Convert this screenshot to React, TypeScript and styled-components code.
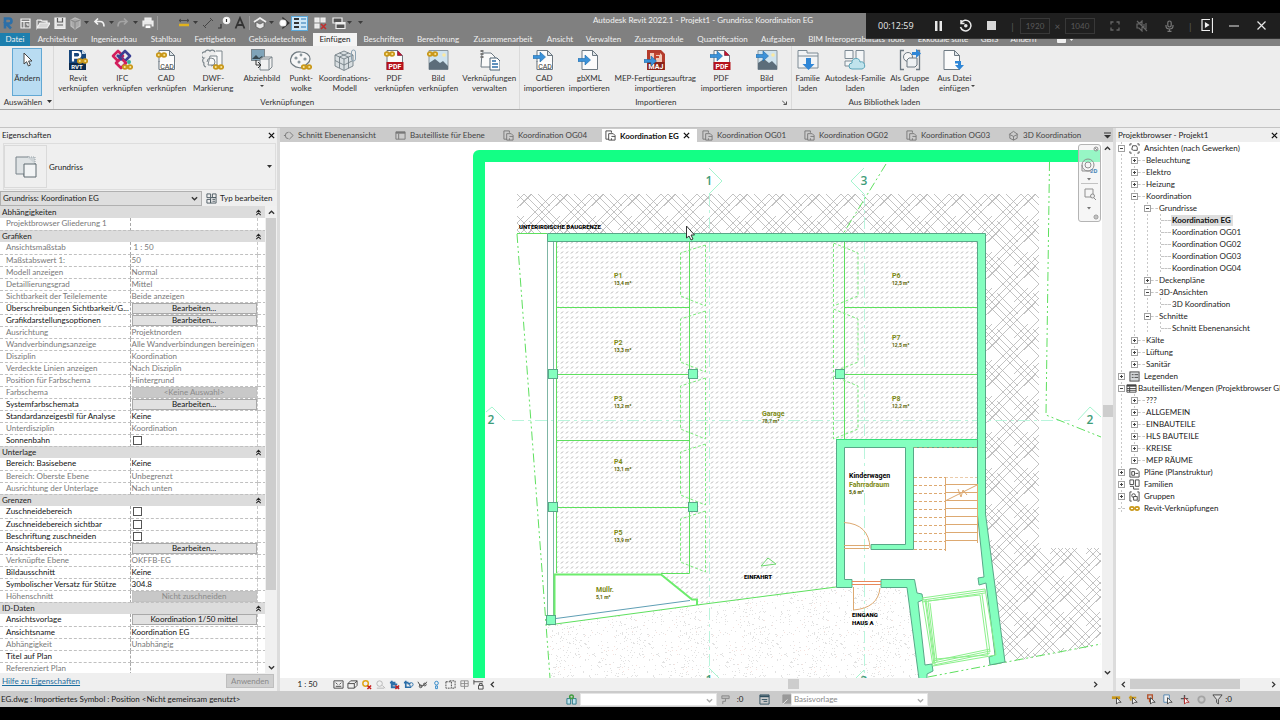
import React from "react";
import styled, { createGlobalStyle, css } from "styled-components";

const GlobalStyle = createGlobalStyle`
  * { box-sizing: border-box; }
  body { margin: 0; background: #000; font-family: Lato, "Open Sans", sans-serif; font-size: 8px; line-height: 12px; color: #222; }
  button, input, select { font: inherit; color: inherit; margin: 0; padding: 0; border: 0; background: none; border-radius: 0; }
  ul { list-style: none; margin: 0; padding: 0; }
  svg { display: block; flex: none; }
`;

const Screen = styled.div`
  display: flex;
  flex-direction: column;
  height: 100vh;
  padding: 13px 0;
  background: #000;
  position: relative;
  overflow: hidden;
  white-space: nowrap;
`;

/* ---------- title bar ---------- */

const TitleBar = styled.header`
  display: flex;
  align-items: center;
  height: 20px;
  background: #808080;
  color: #f2f2f2;
`;
const QuickTools = styled.div`
  display: flex;
  align-items: center;
  height: 17px;
`;
const QuickButton = styled.button<{ $w: number; $on?: boolean }>`
  display: flex;
  align-items: center;
  justify-content: center;
  width: ${(p) => p.$w}px;
  height: 15px;
  ${(p) => p.$on && css`background: #cde6f7; outline: 1px solid #5aa9dc; outline-offset: -1px;`}
`;
const QuickDivider = styled.span<{ $w: number }>`
  width: ${(p) => p.$w}px;
  height: 14px;
  border-left: 1px solid #9c9c9c;
`;
const WindowTitle = styled.h1`
  margin: 0 0 6px 226px;
  font-size: 8px;
  line-height: 12px;
  font-weight: 400;
`;

const RibbonTabs = styled.nav`
  display: flex;
  height: 13px;
  background: #808080;
`;
const RibbonTab = styled.button<{ $w: number; $kind?: "file" | "active" }>`
  flex: none;
  width: ${(p) => p.$w}px;
  height: 13px;
  line-height: 13px;
  color: #f0f0f0;
  text-align: center;
  ${(p) => p.$kind === "file" && css`background: #1d7fae; margin-right: 1px;`}
  ${(p) => p.$kind === "active" && css`background: #f4f4f4; color: #222;`}
`;

/* ---------- recorder overlay ---------- */

const Recorder = styled.div`
  position: absolute;
  top: 13px;
  right: 0;
  width: 414px;
  height: 26px;
  display: flex;
  align-items: center;
  background: #1f1f1f;
  color: #e8e8e8;
  border-bottom: 1px solid #333;
`;
const RecTime = styled.span`
  width: 58px;
  padding-left: 12px;
  font-family: "Open Sans", sans-serif;
  font-size: 9px;
`;
const RecButton = styled.button<{ $w: number }>`
  display: flex;
  align-items: center;
  justify-content: center;
  width: ${(p) => p.$w}px;
  height: 20px;
`;
const RecField = styled.input`
  width: 30px;
  height: 16px;
  border: 1px solid #383838;
  color: #5a5a5a;
  text-align: center;
  font-size: 8px;
`;
const RecText = styled.span<{ $w: number }>`
  width: ${(p) => p.$w}px;
  text-align: center;
  color: #5a5a5a;
  font-size: 10px;
`;

/* ---------- ribbon ---------- */

const Ribbon = styled.section`
  display: flex;
  height: 64px;
  background: #ededed;
  border-bottom: 1px solid #a6a6a6;
  flex: none;
`;
const RibbonGroup = styled.div<{ $pad?: string }>`
  display: flex;
  flex-direction: column;
  padding: ${(p) => p.$pad ?? "0"};
  border-right: 1px solid #dadada;
  &:last-child { border-right: 0; }
`;
const RibbonRow = styled.div`
  display: flex;
  justify-content: center;
  padding-top: 2px;
  height: 50px;
`;
const BigButton = styled.button<{ $w: number; $on?: boolean }>`
  display: flex;
  flex-direction: column;
  align-items: center;
  width: ${(p) => p.$w}px;
  height: 48px;
  padding-top: 1px;
  line-height: 10px;
  color: #333;
  ${(p) => p.$on && css`background: #b9dcf2; outline: 1px solid #62a8d4; outline-offset: -1px;`}
`;
const BigLabel = styled.span`
  margin-top: 2px;
  text-align: center;
  white-space: pre;
  position: relative;
`;
const DropMark = styled.i<{ $right?: boolean }>`
  display: block;
  width: 0;
  height: 0;
  margin: 2px auto 0;
  border: 2px solid transparent;
  border-top-color: #444;
  border-bottom: 0;
  ${(p) => p.$right && css`position: absolute; right: -4px; top: 10px;`}
`;
const GroupLabel = styled.div`
  position: relative;
  display: flex;
  align-items: center;
  justify-content: center;
  gap: 5px;
  line-height: 12px;
  color: #333;
`;
const Launcher = styled.button`
  position: absolute;
  right: 2px;
  top: 4px;
`;
const OptionsBar = styled.div`
  height: 18px;
  flex: none;
  background: #eee;
  border-bottom: 1px solid #c4c4c4;
`;

/* ---------- properties palette ---------- */

const Main = styled.main`
  display: flex;
  flex: 1;
  min-height: 0;
  background: #eee;
`;
const Palette = styled.aside`
  display: flex;
  flex-direction: column;
  width: 280px;
  flex: none;
  background: #efefef;
  border-right: 3px solid #dcdcdc;
`;
const PaletteTitle = styled.div`
  display: flex;
  justify-content: space-between;
  align-items: center;
  height: 14px;
  padding: 0 2px;
  flex: none;
`;
const CloseButton = styled.button`
  width: 8px;
  height: 10px;
  display: flex;
  align-items: center;
  justify-content: center;
`;
const TypeBox = styled.div`
  display: flex;
  align-items: center;
  height: 47px;
  margin: 1px 1px 0 3px;
  border: 1px solid #ddd;
  flex: none;
`;
const TypeThumb = styled.div`
  display: flex;
  align-items: center;
  justify-content: center;
  width: 43px;
  height: 43px;
  margin-right: 2px;
  border: 1px solid #dadada;
`;
const TypeDrop = styled.button`
  margin-left: auto;
  width: 8px;
`;
const InstanceRow = styled.div`
  display: flex;
  align-items: center;
  height: 16px;
  flex: none;
`;
const Combo = styled.label<{ $w: number; $white?: boolean }>`
  position: relative;
  display: flex;
  align-items: center;
  width: ${(p) => p.$w}px;
  height: ${(p) => (p.$white ? 13 : 15)}px;
  background: ${(p) => (p.$white ? "#fff" : "#dedede")};
  border: 1px solid ${(p) => (p.$white ? "#e4e4e4" : "#b0b0b0")};
  select {
    appearance: none;
    width: 100%;
    padding-left: 2px;
    color: ${(p) => (p.$white ? "#888" : "#222")};
    outline: 0;
  }
  svg { position: absolute; right: 3px; top: 3px; pointer-events: none; }
`;
const TypeEdit = styled.button`
  display: flex;
  align-items: center;
  gap: 3px;
  margin-left: 4px;
`;
const GridArea = styled.div`
  display: flex;
  flex: 1;
  min-height: 0;
`;
const GridClip = styled.div`
  width: 265px;
  overflow: hidden;
  background: #fff;
`;
const Grid = styled.table`
  width: 265px;
  table-layout: fixed;
  border-collapse: collapse;
`;
const HeadCell = styled.th`
  height: 12px;
  padding: 0 2px;
  line-height: 11px;
  background: #dcdcdc;
  text-align: left;
  font-weight: 400;
  button { float: right; width: 8px; height: 11px; display: flex; align-items: center; }
`;
const NameCell = styled.th<{ $dim: boolean }>`
  height: 12px;
  padding: 0 0 0 6px;
  line-height: 11px;
  text-align: left;
  font-weight: 400;
  color: ${(p) => (p.$dim ? "#787878" : "#111")};
  border-bottom: 1px dashed #c0c0c0;
  border-right: 1px dashed #a8a8a8;
  overflow: hidden;
`;
const ValueCell = styled.td<{ $dim?: boolean }>`
  height: 12px;
  padding: 0 0 0 1px;
  line-height: 11px;
  color: ${(p) => (p.$dim ? "#787878" : "#111")};
  border-bottom: 1px dashed #c0c0c0;
  border-right: 1px dashed #c8c8c8;
  overflow: hidden;
`;
const CellButton = styled.button<{ $dim: boolean }>`
  display: block;
  width: 125px;
  height: 11px;
  line-height: 9px;
  border: 1px solid ${(p) => (p.$dim ? "#c2c2c2" : "#a9a9a9")};
  background: ${(p) => (p.$dim ? "#c8c8c8" : "#e1e1e1")};
  color: ${(p) => (p.$dim ? "#8a8a8a" : "#111")};
`;
const Check = styled.input`
  appearance: none;
  display: block;
  width: 9px;
  height: 9px;
  margin: 1px;
  border: 1px solid #555;
  background: #fff;
`;
const VScroll = styled.div<{ $from: number; $size: number; $w: number }>`
  display: flex;
  flex-direction: column;
  justify-content: space-between;
  align-items: center;
  width: ${(p) => p.$w}px;
  flex: none;
  background: linear-gradient(#cdcdcd, #cdcdcd) center ${(p) => p.$from}px / 10px ${(p) => p.$size}px no-repeat #f0f0f0;
  button { height: 12px; width: 100%; display: flex; align-items: center; justify-content: center; }
`;
const PaletteFoot = styled.div`
  display: flex;
  justify-content: space-between;
  align-items: center;
  height: 18px;
  padding: 0 3px 2px 2px;
  flex: none;
  a { color: #1a6d9e; }
`;
const Apply = styled.button`
  width: 48px;
  height: 14px;
  line-height: 12px;
  border: 1px solid #bfbfbf;
  background: #cfcfcf;
  color: #8a8a8a;
`;

/* ---------- drawing area ---------- */

const Center = styled.section`
  display: flex;
  flex-direction: column;
  flex: 1;
  min-width: 0;
  background: #fff;
`;
const ViewTabs = styled.div`
  display: flex;
  height: 14px;
  flex: none;
  background: #cbcbcb;
`;
const ViewTab = styled.button<{ $w: number; $on?: boolean }>`
  display: flex;
  align-items: center;
  gap: 4px;
  width: ${(p) => p.$w}px;
  padding-left: 3px;
  color: #444;
  flex: none;
  ${(p) => p.$on && css`background: #fff; color: #111; font-weight: 700; margin: 1px 2px 0 0;`}
`;
const TabMenu = styled.button`
  margin-left: auto;
  width: 12px;
  display: flex;
  align-items: center;
  justify-content: center;
`;
const CanvasRow = styled.div`
  display: flex;
  flex: 1;
  min-height: 0;
`;
const Canvas = styled.div`
  position: relative;
  flex: 1;
  min-width: 0;
  overflow: hidden;
`;
const Plan = styled.svg`
  width: 100%;
  height: 100%;
`;
const NavBar = styled.div`
  position: absolute;
  top: 2px;
  right: 1px;
  width: 23px;
  height: 78px;
  border: 1px solid #b4b4b4;
  border-radius: 3px;
  background: rgba(240, 240, 240, 0.6);
`;
const ViewBar = styled.div`
  display: flex;
  align-items: center;
  height: 13px;
  padding-bottom: 1px;
  flex: none;
  background: #f0f0f0;
`;
const ViewScale = styled.button`
  width: 51px;
  padding-left: 4px;
  text-align: center;
`;
const ViewButton = styled.button`
  width: 14px;
  height: 12px;
  display: flex;
  align-items: center;
  justify-content: center;
`;
const HTrack = styled.div<{ $from: number; $size: number }>`
  flex: 1;
  align-self: stretch;
  background: linear-gradient(#cdcdcd, #cdcdcd) ${(p) => p.$from}px center / ${(p) => p.$size}px 10px no-repeat;
`;

/* ---------- project browser ---------- */

const Browser = styled.aside`
  display: flex;
  flex-direction: column;
  width: 167px;
  flex: none;
  background: #fff;
  border-left: 3px solid #dcdcdc;
`;
const BrowserTitle = styled(PaletteTitle)`
  background: #efefef;
`;
const Tree = styled.ul`
  flex: 1;
  min-height: 0;
  overflow: hidden;
`;
const guide = (x: number) => `linear-gradient(#c8c8c8 60%, transparent 60%) ${x}px 0 / 1px 4px repeat-y`;
const TreeRow = styled.li<{ $level: number }>`
  display: flex;
  align-items: center;
  height: 12px;
  padding-left: ${(p) => p.$level * 13 + 2}px;
  background: ${(p) => Array.from({ length: p.$level + 1 }, (_, i) => guide(i * 13 + 5)).join(", ")};
`;
const TreeToggle = styled.button`
  width: 7px;
  height: 7px;
  border: 1px solid #a2a2a2;
  background: #fff;
  display: flex;
  align-items: center;
  justify-content: center;
  flex: none;
`;
const TreeLine = styled.span<{ $leaf?: boolean }>`
  flex: none;
  width: ${(p) => (p.$leaf ? 10 : 7)}px;
  margin-left: ${(p) => (p.$leaf ? 4 : 0)}px;
  border-top: 1px dashed #c4c4c4;
`;
const TreeIcon = styled.span`
  display: flex;
  width: 18px;
  padding-left: 1px;
  justify-content: center;
`;
const TreeText = styled.span<{ $on?: boolean }>`
  padding: 0 2px 0 1px;
  line-height: 11px;
  ${(p) => p.$on && css`background: #dedede; font-weight: 700; color: #111;`}
`;

/* ---------- status bar ---------- */

const StatusBar = styled.footer`
  display: flex;
  align-items: center;
  height: 16px;
  flex: none;
  background: #cbcbcb;
  color: #222;
`;
const StatusMessage = styled.span`
  width: 562px;
  padding-left: 1px;
`;
const StatusItem = styled.span<{ $w: number }>`
  width: ${(p) => p.$w}px;
  display: flex;
  align-items: center;
  justify-content: center;
  flex: none;
`;
const StatusEnd = styled.div`
  display: flex;
  align-items: center;
  margin-left: auto;
  padding-right: 48px;
`;

/* ---------- small glyphs ---------- */

const Chevron = ({ dir = "down", c = "#333" }: { dir?: "up" | "down" | "left" | "right"; c?: string }) => {
  const d = { down: "M1 2.5l3 3 3-3", up: "M1 5.5l3-3 3 3", left: "M5.5 1l-3 3 3 3", right: "M2.5 1l3 3-3 3" }[dir];
  return <svg width="7" height="7" viewBox="0 0 8 8"><path d={d} fill="none" stroke={c} strokeWidth="1.5" /></svg>;
};
const Cross = ({ s = 7 }: { s?: number }) => (
  <svg width={s} height={s} viewBox="0 0 8 8"><path d="M1 1l6 6M7 1L1 7" stroke="#111" strokeWidth="1.5" /></svg>
);
const Down = ({ c = "#333" }: { c?: string }) => <svg width="5" height="4" viewBox="0 0 5 4"><path d="M0 0h5L2.500 3z" fill={c} /></svg>;
const Collapse = () => (
  <svg width="7" height="7" viewBox="0 0 8 8"><path d="M1.500 4L4 1.500 6.500 4M1.500 7L4 4.500 6.500 7" fill="none" stroke="#222" strokeWidth="1.200" /></svg>
);

/* ---------- ribbon icons ---------- */

const Chain = ({ x, y }: { x: number; y: number }) => (
  <g transform={`translate(${x} ${y})`} fill="#fbe9a0" stroke="#c9981a" strokeWidth="1.700">
    <ellipse cx="3" cy="3" rx="2.200" ry="1.900" />
    <ellipse cx="8" cy="3" rx="2.200" ry="1.900" />
    <path d="M3.500 3h4" />
  </g>
);
const Sheet = ({ x = 3 }: { x?: number }) => (
  <g transform={`translate(${x} 0)`}>
    <path d="M1 1.500h10.500l5 5v14H1z" fill="#fbfbfb" stroke="#6d7982" />
    <path d="M11.500 1.500v5h5z" fill="#dfe5e9" stroke="#6d7982" />
  </g>
);
const BlueArrow = ({ y = 4 }: { y?: number }) => (
  <path d={`M0 ${y + 3.5}h7v-3.500l5.500 5-5.500 5v-3.500H0z`} fill="#3b92d9" stroke="#1d6aa8" strokeWidth=".6" />
);
const Photo = () => (
  <g>
    <path d="M2 1.500h19v19H2z" fill="#cfe3ee" stroke="#8b979e" />
    <circle cx="17" cy="6" r="1.800" fill="#fbe9a0" />
    <path d="M2 14l6-4 5 4 3-2 5 5v3.500H2z" fill="#5c6d7a" />
  </g>
);
const Svg22 = ({ children }: { children: React.ReactNode }) => (
  <svg width="22" height="22" viewBox="0 0 22 22">{children}</svg>
);
const tag = (t: string, fill: string, color: string, weight = 700) => (
  <g>
    <rect x="3.500" y="13" width="17" height="8" fill={fill} />
    <text x="12" y="19.500" fontSize="7" fontFamily="Roboto" fontWeight={weight} textAnchor="middle" fill={color}>{t}</text>
  </g>
);
const cadTag = (
  <g>{tag("CAD", "#fff", "#333", 400)}<path d="M4 12v8.500h15.500V12" fill="none" stroke="#6d7982" /></g>
);

const icons: Record<string, React.ReactNode> = {
  modify: <Svg22><path d="M8 4v11l2.600-2.300 1.800 4.300 2-.9-1.800-4.100H16z" fill="#fff" stroke="#444" /></Svg22>,
  revit: <Svg22><path d="M2 1h13l4 4v16H2z" fill="#16467c" /><path d="M15 1v4h4z" fill="#c5d6e6" /><path d="M6 12.500V3h4.500a2.800 2.800 0 0 1 0 5.600H6.500" fill="none" stroke="#fff" strokeWidth="2.200" /><rect x="2" y="14" width="17" height="7" fill="#0c2b4e" /><text x="10" y="20" fontSize="6" fontFamily="Roboto" fontWeight="700" textAnchor="middle" fill="#fff">RVT</text><Chain x={10} y={9} /></Svg22>,
  ifc: <Svg22><g fill="none" strokeWidth="2.600" strokeLinejoin="round"><path d="M7 2l5 5-5 5-5-5z" stroke="#d21f5e" /><path d="M14 2l5 5-5 5-5-5z" stroke="#3a3f94" /><path d="M10 9l5 5-5 5-5-5z" stroke="#d21f5e" /><path d="M6 6l5 5" stroke="#3a3f94" /></g><circle cx="18" cy="13" r="2" fill="#35b09b" /><Chain x={11} y={15} /></Svg22>,
  cadLink: <Svg22><Sheet />{cadTag}<Chain x={1} y={3} /></Svg22>,
  dwf: <Svg22><path d="M4 18a3 3 0 0 1-2-4 3 3 0 0 1 0-5 3 3 0 0 1 1-6 3 3 0 0 1 5-1 3 3 0 0 1 5 1" fill="none" stroke="#7c868c" strokeWidth="1.200" /><path d="M14 2h6v16h-8M8 7h7v9H6z" fill="#f8f8f8" stroke="#7c868c" /><path d="M5 13a4 4 0 1 1 4 4" fill="none" stroke="#7c868c" /><Chain x={11} y={15} /></Svg22>,
  decal: <Svg22><rect x=".500" y=".500" width="13" height="11" fill="#7fa3b8" stroke="#7c868c" /><path d="M1 10l4-4 3 3 3-2 2 3z" fill="#37474f" /><path d="M9 10l3-2h9v10l-3 3H9z" fill="#f2f2f2" stroke="#7c868c" /><path d="M9 10h9v11M18 10l3-2" fill="none" stroke="#7c868c" /><path d="M5 11v5h4M7 13l3 3-3 3" stroke="#333" fill="none" /></Svg22>,
  points: <Svg22><path d="M3 16a6 6 0 0 1-2-7c1-4 5-7 10-6 5 0 9 3 9 7s-3 4-5 7-9 2-12-1z" fill="#f6f6f6" stroke="#6f7a80" strokeWidth="1.200" /><g fill="#8a969c"><circle cx="6" cy="9" r="1.600" /><circle cx="11" cy="6" r="1.400" /><circle cx="15" cy="10" r="1.600" /><circle cx="9" cy="13" r="1.500" /></g><Chain x={11} y={15} /></Svg22>,
  coord: <Svg22><g fill="#d8dee1" stroke="#737f86" strokeWidth=".9"><path d="M1 6l9-4 9 4v11l-9 4.500L1 17z" /><path d="M1 6l9 4 9-4M10 10v11M1 11.500l9 4.500 9-4.500M5.500 4l9 4.200v11M14.500 4L5.500 8v11" fill="none" /></g><rect x="17.500" y="1" width="4" height="11" rx="2" fill="none" stroke="#8da3b3" /></Svg22>,
  pdfLink: <Svg22><Sheet /><path d="M14.500 1.500v5h5z" fill="#c4122f" />{tag("PDF", "#b5121b", "#fff")}<Chain x={1} y={2} /></Svg22>,
  imageLink: <Svg22><Photo /><Chain x={0} y={2} /></Svg22>,
  manage: <Svg22><path d="M4 4h9l4 4v10H3z" fill="#fafafa" stroke="#6d7982" /><path d="M4 1v9" stroke="#777" strokeWidth="3" strokeDasharray="2 1" /><path d="M12 9h7l3 3v9H12z" fill="#fff" stroke="#4c6273" /><path d="M14 12h4M14 15h6M14 18h6" stroke="#2c6ea8" strokeWidth="1.300" /></Svg22>,
  cadImport: <Svg22><Sheet />{cadTag}<BlueArrow y={3} /></Svg22>,
  xml: <Svg22><Sheet /><BlueArrow y={6} /></Svg22>,
  mep: <Svg22><path d="M3 1h14l4 4v16H3z" fill="#b43c2c" /><path d="M6 4h10l2 2v7H6z" fill="#f2c9b8" /><path d="M11 12V5h5M11 8h4" fill="none" stroke="#c2452f" strokeWidth="2" />{tag("MAJ", "#8a2318", "#fff")}<BlueArrow y={7} /></Svg22>,
  pdfImport: <Svg22><Sheet /><path d="M14.500 1.500v5h5z" fill="#c4122f" />{tag("PDF", "#b5121b", "#fff")}<BlueArrow y={2} /></Svg22>,
  imageImport: <Svg22><Photo /><BlueArrow y={2} /></Svg22>,
  family: <Svg22><path d="M1 4V1.500h9V4h11v15H1z" fill="#f1f3f5" stroke="#7c8a94" /><path d="M1 7h20" stroke="#7c8a94" /><path d="M9 9h5v6h3.500l-6 6-6-6H9z" fill="#2f86d6" /></Svg22>,
  cloudFamily: <Svg22><path d="M1 1.500h8v8H1zM12 1.500h8v16h-8zM1 12h8v5H1z" fill="#f4f6f7" stroke="#7c8a94" /><path d="M8 20a3 3 0 0 1 0-6 4 4 0 0 1 8-1 3.500 3.500 0 0 1 2 7z" fill="#bfe3ec" stroke="#58a3b8" /></Svg22>,
  group: <Svg22><path d="M5 1.500H1.500v19H5M17 1.500h3.500v19H17" fill="none" stroke="#6d7982" strokeWidth="1.300" /><circle cx="9" cy="8" r="4.500" fill="#f6f6f6" stroke="#6d7982" /><path d="M8 11l2-2h8v7l-2 2H8z" fill="#eef1f3" stroke="#6d7982" /><path d="M13 3h4V0l5 4.500L17 9V6h-4z" fill="#2f86d6" /></Svg22>,
  file: <Svg22><Sheet x={0} /><path d="M12 12h6v4h3l-4.500 5-4.500-5h3v-1.500h-3z" fill="#2f86d6" /></Svg22>,
};

type RibbonItem = [string, string, number, ("below" | "right")?];
const ribbonGroups: { label: string; pad: string; launcher?: boolean; items: RibbonItem[] }[] = [
  {
    label: "Verknüpfungen", pad: "0 1px 0 2px",
    items: [
      ["revit", "Revit\nverknüpfen", 44], ["ifc", "IFC\nverknüpfen", 44], ["cadLink", "CAD\nverknüpfen", 44],
      ["dwf", "DWF-\nMarkierung", 50], ["decal", "Abziehbild", 47, "below"], ["points", "Punkt-\nwolke", 32],
      ["coord", "Koordinations-\nModell", 55], ["pdfLink", "PDF\nverknüpfen", 44], ["imageLink", "Bild\nverknüpfen", 44],
      ["manage", "Verknüpfungen\nverwalten", 58],
    ],
  },
  {
    label: "Importieren", pad: "0 2px", launcher: true,
    items: [
      ["cadImport", "CAD\nimportieren", 44], ["xml", "gbXML\nimportieren", 46], ["mep", "MEP-Fertigungsauftrag\nimportieren", 86],
      ["pdfImport", "PDF\nimportieren", 46], ["imageImport", "Bild\nimportieren", 45],
    ],
  },
  {
    label: "Aus Bibliothek laden", pad: "0",
    items: [
      ["family", "Familie\nladen", 31], ["cloudFamily", "Autodesk-Familie\nladen", 64], ["group", "Als Gruppe\nladen", 45],
      ["file", "Aus Datei\neinfügen", 44, "right"],
    ],
  },
];

const ribbonTabs: [string, number, ("file" | "active")?][] = [
  ["Datei", 30, "file"], ["Architektur", 53], ["Ingenieurbau", 60], ["Stahlbau", 44], ["Fertigbeton", 54], ["Gebäudetechnik", 71],
  ["Einfügen", 44, "active"], ["Beschriften", 53], ["Berechnung", 56], ["Zusammenarbeit", 74], ["Ansicht", 40], ["Verwalten", 47],
  ["Zusatzmodule", 64], ["Quantification", 63], ["Aufgaben", 48], ["BIM Interoperabilitäts Tools", 109], ["Ekkodale suite", 64],
  ["GBIS", 29], ["Ändern", 39],
];

/* ---------- quick access icons ---------- */

const Q = ({ children }: { children: React.ReactNode }) => (
  <svg width="14" height="14" viewBox="0 0 14 14" fill="none" stroke="#f0f0f0" strokeWidth="1.200">{children}</svg>
);
const dropdown = <Down c="#3c3c3c" />;
const quickItems: { name: string; w: number; icon?: React.ReactNode; divider?: boolean; on?: boolean }[] = [
  { name: "Revit", w: 16, icon: <Q><path d="M4 12.500V2.500h4a2.500 2.500 0 0 1 0 5H5l5 5" stroke="#2c6fa8" strokeWidth="2.600" /></Q> },
  { name: "Start", w: 17, icon: <Q><path d="M3 3h9v9H3zM3 5.500h9M6 5.500V12" /><path d="M8 8h2v2" /></Q> },
  { name: "Öffnen", w: 19, icon: <Q><path d="M1 4h4l1 1h5v2M1 4v8l3-5h10l-3 5H1" fill="#d6d6d6" /></Q> },
  { name: "Speichern", w: 16, icon: <Q><path d="M2 2h10v10.500H2z" fill="#e4e4e4" /><path d="M4.500 2v4h5V2M4 9h6" stroke="#5a5a5a" /></Q> },
  { name: "Synchronisieren", w: 15, icon: <Q><path d="M2 4l4-2 5 2v6l-5 3-4-3z" fill="#a9a9a9" stroke="#bdbdbd" /><path d="M2 4l4 2 5-2M6 6v7" stroke="#8a8a8a" /></Q> },
  { name: "Synchronisieren Optionen", w: 7, icon: dropdown },
  { name: "Rückgängig", w: 18, icon: <Q><path d="M6 2.500L3 5.500l3 3M3 5.500h5q4 0 4 5" strokeWidth="1.700" /></Q> },
  { name: "Rückgängig Liste", w: 6, icon: dropdown },
  { name: "Wiederherstellen", w: 18, icon: <Q><path d="M8 2.500l3 3-3 3M11 5.500H6q-4 0-4 5" stroke="#a4a4a4" strokeWidth="1.700" /></Q> },
  { name: "Wiederherstellen Liste", w: 6, icon: dropdown },
  { name: "Drucken", w: 19, icon: <Q><path d="M4 5V2h6v3M2 5h10v5H2z" fill="#e8e8e8" /><path d="M4 9h6v3.500H4z" fill="#fff" stroke="#888" /></Q> },
  { name: "", w: 18, divider: true },
  { name: "Messen", w: 17, icon: <Q><path d="M2 4.500h10M4 3L2 4.500 4 6M10 3l2 1.500L10 6" stroke="#444" strokeWidth=".9" /><path d="M2 9h10" stroke="#e0b21e" strokeWidth="2.500" /></Q> },
  { name: "Messen Optionen", w: 7, icon: dropdown },
  { name: "Bemaßung", w: 18, icon: <Q><path d="M3 11l8-8M2 9l3 3M9 2l3 3" stroke="#444" strokeWidth="1" /></Q> },
  { name: "Beschriften", w: 14, icon: <Q><circle cx="9.500" cy="4.500" r="3.200" fill="#fff" /><path d="M9.500 3v3" stroke="#333" /><path d="M1 12h3V8" stroke="#333" /></Q> },
  { name: "Text", w: 18, icon: <Q><path d="M2.500 12.500L7 2l4.500 10.500M4 9h6" stroke="#333" strokeWidth="1.800" /></Q> },
  { name: "", w: 3, divider: true },
  { name: "3D-Ansicht", w: 15, icon: <Q><path d="M1 6l6-4 6 4" strokeWidth="1.800" /><path d="M3 6v5l4 2 4-2V6L7 8z" fill="#e8e8e8" stroke="#555" strokeWidth=".7" /></Q> },
  { name: "3D-Ansicht Optionen", w: 8, icon: dropdown },
  { name: "Schnitt", w: 16, icon: <Q><path d="M7 2l6 5-6 5z" fill="#333" stroke="#333" /><circle cx="7" cy="7" r="3" fill="#fff" /></Q> },
  { name: "Feine Linien", w: 17, on: true, icon: <Q><path d="M1 3h5M1 7h5M1 11h5" stroke="#333" strokeWidth="1.800" /><path d="M8 3h5M8 7h5M8 11h5" stroke="#2675b3" /></Q> },
  { name: "Inaktive schließen", w: 24, icon: <Q><path d="M2 2h4v4H2zM8 2h4v4H8zM2 8h4v4H2z" fill="#e8e8e8" /><path d="M8 8l5 5M13 8l-5 5" stroke="#c22e2e" strokeWidth="1.600" /></Q> },
  { name: "Fenster wechseln", w: 14, icon: <Q><path d="M1 2h9v5H1zM4 6.500h9v6H4z" fill="#555" /><path d="M4 7.500h9" strokeWidth="2" /></Q> },
  { name: "Fenster Liste", w: 7, icon: dropdown },
  { name: "Anpassen", w: 14, icon: dropdown },
];

/* ---------- property data ---------- */

type Prop = { n: string; v?: string; dim?: boolean; kind?: "head" | "button" | "check" };
const h = (n: string): Prop => ({ n, kind: "head" });
const d = (n: string, v = ""): Prop => ({ n, v, dim: true });
const t = (n: string, v = ""): Prop => ({ n, v });
const b = (n: string, v: string, dim = false): Prop => ({ n, v, dim, kind: "button" });
const c = (n: string): Prop => ({ n, kind: "check" });
const props: Prop[] = [
  h("Abhängigkeiten"), d("Projektbrowser Gliederung 1"),
  h("Grafiken"), d("Ansichtsmaßstab", "\u00a01 : 50"), d("Maßstabswert 1:", "50"), d("Modell anzeigen", "Normal"),
  d("Detaillierungsgrad", "Mittel"), d("Sichtbarkeit der Teilelemente", "Beide anzeigen"),
  b("Überschreibungen Sichtbarkeit/G...", "Bearbeiten..."), b("Grafikdarstellungsoptionen", "Bearbeiten..."),
  d("Ausrichtung", "Projektnorden"), d("Wandverbindungsanzeige", "Alle Wandverbindungen bereinigen"),
  d("Disziplin", "Koordination"), d("Verdeckte Linien anzeigen", "Nach Disziplin"), d("Position für Farbschema", "Hintergrund"),
  b("Farbschema", "<Keine Auswahl>", true), b("Systemfarbschemata", "Bearbeiten..."), t("Standardanzeigestil für Analyse", "Keine"),
  d("Unterdisziplin", "Koordination"), c("Sonnenbahn"),
  h("Unterlage"), t("Bereich: Basisebene", "Keine"), d("Bereich: Oberste Ebene", "Unbegrenzt"), d("Ausrichtung der Unterlage", "Nach unten"),
  h("Grenzen"), c("Zuschneidebereich"), c("Zuschneidebereich sichtbar"), c("Beschriftung zuschneiden"),
  b("Ansichtsbereich", "Bearbeiten..."), d("Verknüpfte Ebene", "OKFFB-EG"), t("Bildausschnitt", "Keine"),
  t("Symbolischer Versatz für Stütze", "304.8"), b("Höhenschnitt", "Nicht zuschneiden", true),
  h("ID-Daten"), b("Ansichtsvorlage", "Koordination 1/50 mittel"), t("Ansichtsname", "Koordination EG"),
  d("Abhängigkeit", "Unabhängig"), t("Titel auf Plan"), d("Referenziert Plan"),
];

/* ---------- tree data ---------- */

type Node = [number, "+" | "-" | "", string, string?];
const tree: Node[] = [
  [0, "-", "Ansichten (nach Gewerken)", "views"], [1, "+", "Beleuchtung"], [1, "+", "Elektro"], [1, "+", "Heizung"], [1, "-", "Koordination"],
  [2, "-", "Grundrisse"], [3, "", "Koordination EG"], [3, "", "Koordination OG01"], [3, "", "Koordination OG02"], [3, "", "Koordination OG03"],
  [3, "", "Koordination OG04"], [2, "+", "Deckenpläne"], [2, "-", "3D-Ansichten"], [3, "", "3D Koordination"], [2, "-", "Schnitte"],
  [3, "", "Schnitt Ebenenansicht"], [1, "+", "Kälte"], [1, "+", "Lüftung"], [1, "+", "Sanitär"], [0, "+", "Legenden", "legend"],
  [0, "-", "Bauteillisten/Mengen (Projektbrowser Gliederung)", "table"], [1, "+", "???"], [1, "+", "ALLGEMEIN"], [1, "+", "EINBAUTEILE"],
  [1, "+", "HLS BAUTEILE"], [1, "+", "KREISE"], [1, "+", "MEP RÄUME"], [0, "+", "Pläne (Planstruktur)", "sheet"],
  [0, "+", "Familien", "family"], [0, "+", "Gruppen", "group"], [0, "", "Revit-Verknüpfungen", "link"],
];
const treeArt: Record<string, React.ReactNode> = {
  views: <path d="M1 3V1h2M9 1h2v2M11 9v2H9M3 11H1V9M4 3h4l1 2v3H5L3 7z" />,
  legend: <g><rect x="1" y="1" width="10" height="10" fill="#d5d8da" /><path d="M3 4h2M6 4h4M3 7h2M6 7h4" /></g>,
  table: <g><path d="M1 2h10v8H1zM1 6h10M1 8h10M4 4v6" /><path d="M1 3h10" strokeWidth="2" /></g>,
  sheet: <path d="M1 2h7l3 3v6H1zM3 5h3v4H3zM7 7h3" />,
  family: <path d="M1 1h4v5H1zM7 1h4v7H7zM1 8h4v3h6" />,
  group: <g><path d="M3 1H1v10h2M9 1h2v10H9" /><circle cx="5" cy="5" r="2" /><path d="M5 6h4v4H5z" fill="#fff" /></g>,
  link: <g stroke="#c9981a" strokeWidth="1.800"><ellipse cx="3.200" cy="6" rx="2.200" ry="1.800" /><ellipse cx="8.800" cy="6" rx="2.200" ry="1.800" /></g>,
};

const viewTabs: [string, string, number, boolean?][] = [
  ["section", "Schnitt Ebenenansicht", 112], ["list", "Bauteilliste für Ebene", 108], ["plan", "Koordination OG04", 102],
  ["plan", "Koordination EG", 95, true], ["plan", "Koordination OG01", 102], ["plan", "Koordination OG02", 102],
  ["plan", "Koordination OG03", 102], ["cube", "3D Koordination", 80],
];
const tabArt: Record<string, React.ReactNode> = {
  section: <path d="M1 6h2M6 2.500a3.500 3.500 0 1 0 0 7M7 2l4 4-4 4" />,
  list: <g><path d="M1 2h10v8H1zM4 4v6" /><path d="M1 3h10" strokeWidth="2" /></g>,
  plan: <path d="M1 1h6v2M1 1v9h3M4 4h5l2 2v5H4zM7 7h4M7 9v2" />,
  cube: <path d="M1 5l5-3.500L11 5M2 5v4l4 2 4-2V5M2 5l4 2 4-2M6 7v4" />,
};

/* ---------- floor plan ---------- */

const stipple = (() => {
  const dots: [number, number][] = [];
  let s = 7;
  const next = () => (s = (s * 16807) % 2147483647) / 2147483647;
  for (let i = 0; i < 260; i++) dots.push([Math.floor(next() * 64), Math.floor(next() * 64)]);
  return dots;
})();

const GREEN = "#5ee05e";
const WALL = { fill: "#84ffbf", stroke: "#58a888", strokeWidth: 1 };
const leftBays = [241, 307, 374, 440, 507];
const rightBays = [241, 307, 374];
const rooms: [number, number, string, string][] = [
  [614, 278, "P1", "13,4 m²"], [614, 345, "P2", "13,3 m²"], [614, 401, "P3", "13,2 m²"], [614, 464, "P4", "13,1 m²"], [614, 535, "P5", "13,9 m²"],
  [892, 278, "P6", "12,5 m²"], [892, 340, "P7", "12,5 m²"], [892, 401, "P8", "12,2 m²"],
  [762, 416, "Garage", "78,7 m²"], [596, 592, "Müllr.", "5,1 m²"],
];
const columns: [number, number][] = [[553, 374], [693, 374], [840, 374], [553, 507], [693, 507], [551, 620]];

const FloorPlan = () => (
  <Plan viewBox="280 142 822 536" preserveAspectRatio="xMinYMin slice" role="img" aria-label="Grundriss Koordination EG">
    <defs>
      <pattern id="dots" width="5" height="5" patternUnits="userSpaceOnUse">
        <path d="M1 3.500L3 1.500" stroke="#989898" strokeWidth=".8" />
      </pattern>
      <pattern id="cross" width="36" height="36" patternUnits="userSpaceOnUse" patternTransform="translate(517 194)">
        <g stroke="#b4b4b4" strokeWidth=".8">
          {[-36, -29, -22, 0, 7, 14].map((o) => <path key={o} d={`M${o} 0l36 36`} />)}
          {[0, 7, 14, 36, 43, 50].map((o) => <path key={o + "b"} d={`M${o} 0l-36 36`} />)}
          <path d="M21 0l12 12M15 0L3 12M21 36l-9-9M29 36l7-7M0 29l7-7" />
        </g>
      </pattern>
      <pattern id="stipple" width="64" height="64" patternUnits="userSpaceOnUse">
        {stipple.map(([x, y], i) => <rect key={i} x={x} y={y} width="1" height="1" fill={i % 9 ? "#e2e2e2" : "#f6e2de"} />)}
      </pattern>
    </defs>

    <path d="M548 625L697 605 836 587H907L919 678H549z" fill="url(#stipple)" />
    <path d="M517 194H1039V548H1101V645L1005 663 986 515V233H517z" fill="url(#cross)" />
    <path d="M556 241H977V440H836V587L697 604 661 573H556z" fill="url(#dots)" />
    <path d="M479 678V156H1101" fill="none" stroke="#13ff85" strokeWidth="12" strokeLinejoin="round" />

    <g fill="none" stroke="#b9f5dc" strokeDasharray="12 4 3 4">
      <path d="M709.500 194V678M864.500 194V678M512 420.500H1070" />
    </g>
    <g fill="none" stroke="#a5f5cf">
      <path d="M709 168l13 13-13 13M864 168l-13 13 13 13M486 412l6-5 13 13M1078 420l12-13 11 10M709 668l10 10M864 670l-8 8" />
    </g>
    <g fontFamily="Open Sans" fontSize="12" fontWeight="600" fill="#3f9d78" textAnchor="middle">
      <text x="709" y="185">1</text><text x="864" y="185">3</text><text x="491" y="424">2</text><text x="1090" y="424">2</text>
      <text x="709" y="684">1</text><text x="864" y="685">3</text>
    </g>
    <g fill="none" stroke={GREEN} strokeDasharray="9 3 2 3 2 3">
      <path d="M517 234L550 678M886 164L843 234M1049.500 162L1046 415 1101 437M928 677L1101 644" />
    </g>
    <path d="M517 233.500H547" stroke={GREEN} />

    <path d="M554 575H661L693 601 554 619z" fill="#fff" />
    <path d="M547.500 241V622M553.500 241V615" stroke="#7fb5a5" />
    <path d="M556.500 241V573M689.500 241V573.500H661M844.500 241V440" fill="none" stroke={GREEN} />
    {leftBays.slice(1).map((y) => <path key={y} d={`M556 ${y}.5H690`} stroke={GREEN} />)}
    {rightBays.slice(1).map((y) => <path key={y} d={`M844 ${y}.5H978`} stroke={GREEN} />)}
    <g fill="none" stroke="#7bea7b" strokeDasharray="3 2">
      {leftBays.map((y) => <path key={y} d={`M705.500 ${y + 4}L680.500 ${y + 12}V${y + 55}L705.500 ${y + 65}z`} />)}
      {rightBays.map((y) => <path key={y} d={`M833.500 ${y + 2}L858 ${y + 12}V${y + 55}L833.500 ${y + 65}z`} />)}
    </g>

    <path d="M554.500 620V574.500H661L692 599.500H697V605" fill="none" stroke="#6cec6c" strokeWidth="2" />
    <path d="M556 618.500L690 600.500" stroke="#5f9fb5" />
    <path d="M548 625L697 605 836 587" fill="none" stroke={GREEN} />

    <path {...WALL} d="M547.500 233.500H985.500V514L1005 662 990 665 989 657 995 655 986 583 979 585 978 578 984 577 977.500 515V241.500H547.500z" />
    <path {...WALL} d="M836.500 439.500H977.500V447.500H913.500V549.500H871V544.500H905.500V447.500H844.500V579.500H852V587.500H836.500z" />
    <path {...WALL} d="M881 579.500H914.500L917 593 922 594 923 600 918 602 925 665 932 664 933 671 927 674V679H919L907 587.500H881z" />
    <path d="M836 439.500H978" stroke="#35e07a" />
    {columns.map(([x, y]) => <rect key={`${x}-${y}`} {...WALL} x={x - 4.5} y={y - 4.5} width="9" height="9" />)}

    <g fill="none" stroke="#8cf08c">
      <path d="M922 598L985 589 996 655 933 666zM922 602L985 593M923 600L985 591M928 601L980 595 988 655 935 659zM930 603L937 662M933 663L990 651M933 661L990 649M934 665L990 653M982 594L990 652M925 600L934 664M926 600L935 664" />
    </g>

    <g fill="none" stroke="#dda971">
      {Array.from({ length: 10 }, (_, i) => <path key={i} d={`M914 ${477 + i * 8}.500H945`} strokeDasharray="3 2" />)}
      {Array.from({ length: 8 }, (_, i) => <path key={i} d={`M945 ${484 + i * 8}.500H977`} />)}
      <path d="M945.500 477V551M977.500 484V543M945 501L977 485M958 489l3 8 2-7 4 5" />
      <path d="M914 447.500H977M945 477.500H977" strokeDasharray="3 2" opacity=".6" />
      <path d="M844 522.500Q869 524 870 548M844 545.500H869M844 548.500H869" />
      <path d="M852 581.500H881M852 584.500H881" stroke="#e8895a" />
      <path d="M853.500 587V610Q878 608 880 588" />
    </g>

    {rooms.map(([x, y, name, area]) => (
      <g key={name} fontFamily="Roboto" fontWeight="700" fill="#5d6608">
        <text x={x} y={y} fontSize="7" fill="#7d8a14">{name}</text>
        <text x={x} y={y + 7} fontSize="5">{area}</text>
      </g>
    ))}
    <g fontFamily="Roboto" fontWeight="900" fill="#000" fontSize="6">
      <text x="519" y="229">UNTERIRDISCHE BAUGRENZE</text>
      <text x="744" y="579">EINFAHRT</text>
      <text x="849" y="478" fontSize="7" fontWeight="700">Kinderwagen</text>
      <text x="849" y="487" fontSize="7" fontWeight="700" fill="#7d8a14">Fahrradraum</text>
      <text x="849" y="494" fontSize="5" fill="#5d6608">5,6 m²</text>
      <text x="852" y="617">EINGANG</text>
      <text x="852" y="625">HAUS A</text>
    </g>
    <path d="M761 566L768 558 776 564z" fill="none" stroke="#6cd66c" />
    <path d="M686.500 226V238L689 236 691 240 693 239 691 235H694.500z" fill="#fff" stroke="#333" />
  </Plan>
);

/* ---------- view control / status icons ---------- */

const S = ({ children, c = "#444" }: { children: React.ReactNode; c?: string }) => (
  <svg width="11" height="11" viewBox="0 0 12 12" fill="none" stroke={c} strokeWidth="1">{children}</svg>
);
const viewIcons: [string, React.ReactNode][] = [
  ["Detaillierungsgrad", <S><path d="M1 2h10v8H1zM3 4l2 2M9 4L7 6M3 8h6" /></S>],
  ["Bildstil", <S><path d="M1 5l3-3h7v5l-3 3H1zM1 5h7v5M8 5l3-3" /></S>],
  ["Sonnenbahn", <S><circle cx="5" cy="5" r="3" stroke="#e0a516" strokeWidth="1.600" /><path d="M7 7l4 4M11 7l-4 4" stroke="#c81e1e" strokeWidth="1.600" /></S>],
  ["Schatten", <S c="#b5b5b5"><circle cx="5" cy="5" r="3" /><path d="M2 10h8M8 7l3 3" /></S>],
  ["Zuschneiden", <S c="#2c6ea8"><path d="M1 4h6M3 2v7h8M4 6h5" strokeWidth="2" /><path d="M7 7l4 4M11 7l-4 4" stroke="#c81e1e" strokeWidth="1.600" /></S>],
  ["Zuschneidebereich", <S c="#2c6ea8"><path d="M1 4h5M3 2v7h6M5 5h3" strokeWidth="1.800" /><circle cx="9" cy="6" r="2" /></S>],
  ["Ausblenden", <S><path d="M1 3l3 5 3-1 4-4" /><circle cx="4" cy="8" r="1.500" /><circle cx="8.500" cy="6" r="1.500" /></S>],
  ["Anzeigen", <S c="#2c86c8"><circle cx="6" cy="4.500" r="2" /><path d="M5 7.500h2v3H5z" /></S>],
  ["Ansichtseigenschaften", <S><path d="M1 3h6v7H1zM5 2h6v8H7" strokeDasharray="2 1" /></S>],
  ["Analysemodell", <S c="#8a8a8a"><path d="M2 2h8v6H2zM2 5h8M6 2v9" /></S>],
  ["Abhängigkeiten", <S><path d="M1 1v5M1 3h10M6 7h5v4H6zM7 7V5h3v2" /></S>],
];
const selectIcons: [string, React.ReactNode][] = [
  ["Verknüpfungen", <S c="#c9981a"><path d="M1 4h9" strokeWidth="3" /><path d="M6 4v7l2-2h3z" fill="#fff" stroke="#444" /></S>],
  ["Unterlage", <S><path d="M1 4h8M3 2v5" stroke="#c9981a" strokeWidth="2" /><path d="M5 4v7l2-2h3z" fill="#fff" /></S>],
  ["Fixiert", <S><path d="M3 1h5v4H3zM5 5v4" stroke="#b3502a" strokeWidth="1.500" /><path d="M6 4v7l2-2h3z" fill="#fff" /></S>],
  ["Fläche", <S><path d="M2 1h6v8H2z" fill="#f3f3f3" stroke="#4f83b0" /><path d="M6 4v7l2-2h3z" fill="#fff" /></S>],
  ["Ziehen", <S><path d="M2 5h8M6 1v8" stroke="#555" strokeWidth="1.500" /><path d="M6 4v7l2-2h3z" fill="#fff" stroke="#b32a2a" /></S>],
  ["Prozesse", <S c="#a4a4a4"><circle cx="6" cy="6" r="3.500" strokeWidth="2" /></S>],
];

export default function App() {
  return (
    <>
      <GlobalStyle />
      <Screen>
        <TitleBar>
          <QuickTools>
            {quickItems.map((q, i) =>
              q.divider ? <QuickDivider key={i} $w={q.w} /> : (
                <QuickButton key={i} $w={q.w} $on={q.on} aria-label={q.name}>{q.icon}</QuickButton>
              ),
            )}
          </QuickTools>
          <WindowTitle>Autodesk Revit 2022.1 - Projekt1 - Grundriss: Koordination EG</WindowTitle>
        </TitleBar>
        <RibbonTabs>
          {ribbonTabs.map(([name, w, kind]) => <RibbonTab key={name} $w={w} $kind={kind}>{name}</RibbonTab>)}
          <RibbonTab $w={44} aria-label="Ribbon minimieren">
            <svg width="32" height="8" viewBox="0 0 32 8"><rect x="14" y="0" width="9" height="7" rx="1" fill="#f0f0f0" /><path d="M26 2h5l-2.500 3z" fill="#f0f0f0" /></svg>
          </RibbonTab>
        </RibbonTabs>

        <Ribbon>
          <RibbonGroup $pad="0 1px 0 2px">
            <RibbonRow>
              <BigButton $w={30} $on>{icons.modify}<BigLabel>Ändern</BigLabel></BigButton>
            </RibbonRow>
            <GroupLabel>&nbsp;Auswählen<Down /></GroupLabel>
          </RibbonGroup>
          {ribbonGroups.map((g) => (
            <RibbonGroup key={g.label} $pad={g.pad}>
              <RibbonRow>
                {g.items.map(([icon, label, w, drop]) => (
                  <BigButton key={icon} $w={w}>
                    {icons[icon]}
                    <BigLabel>{label}{drop && <DropMark $right={drop === "right"} />}</BigLabel>
                  </BigButton>
                ))}
              </RibbonRow>
              <GroupLabel>
                {g.label}
                {g.launcher && (
                  <Launcher aria-label="Importoptionen"><svg width="5" height="5" viewBox="0 0 5 5"><path d="M0 .5l4 4M4.500 1.500v3h-3" fill="none" stroke="#555" /></svg></Launcher>
                )}
              </GroupLabel>
            </RibbonGroup>
          ))}
        </Ribbon>
        <OptionsBar />

        <Main>
          <Palette>
            <PaletteTitle>Eigenschaften<CloseButton aria-label="Schließen"><Cross /></CloseButton></PaletteTitle>
            <TypeBox>
              <TypeThumb>
                <svg width="22" height="22" viewBox="0 0 22 22"><path d="M1 1h13l6 6v13H9v-2H1z" fill="#dfe3e5" stroke="#78838a" /><path d="M12 1h8v7" fill="#cdd3d6" stroke="#9aa4aa" strokeDasharray="1 1" /><path d="M9 8h12v13H9z" fill="#f2f4f5" stroke="#5f6a70" /></svg>
              </TypeThumb>
              Grundriss
              <TypeDrop aria-label="Typ wählen"><Down /></TypeDrop>
            </TypeBox>
            <InstanceRow>
              <Combo $w={202}>
                <select aria-label="Ansicht"><option>Grundriss: Koordination EG</option></select>
                <Chevron />
              </Combo>
              <TypeEdit>
                <svg width="11" height="11" viewBox="0 0 12 12" fill="none" stroke="#4c5a63"><path d="M1 1h4v4H1zM7 1h4v4H7zM1 7h4v4H1zM5 5h6v6H5zM7 7h3M7 9h3" /></svg>
                Typ bearbeiten
              </TypeEdit>
            </InstanceRow>
            <GridArea>
              <GridClip>
                <Grid>
                  <colgroup><col width="130" /><col width="127" /><col width="8" /></colgroup>
                  <tbody>
                    {props.map((p) => p.kind === "head" ? (
                      <tr key={p.n}><HeadCell colSpan={3}><button aria-label={`${p.n} einklappen`}><Collapse /></button>{p.n}</HeadCell></tr>
                    ) : (
                      <tr key={p.n}>
                        <NameCell scope="row" $dim={!!p.dim}>{p.n}</NameCell>
                        <ValueCell $dim={p.dim}>
                          {p.kind === "button" ? <CellButton $dim={!!p.dim}>{p.v}</CellButton>
                            : p.kind === "check" ? <Check type="checkbox" aria-label={p.n} />
                            : <span>{p.v}</span>}
                        </ValueCell>
                        <ValueCell />
                      </tr>
                    ))}
                  </tbody>
                </Grid>
              </GridClip>
              <VScroll $from={12} $size={372} $w={12}>
                <button aria-label="Nach oben"><Chevron dir="up" /></button>
                <button aria-label="Nach unten"><Chevron /></button>
              </VScroll>
            </GridArea>
            <PaletteFoot><a href="#hilfe">Hilfe zu Eigenschaften</a><Apply>Anwenden</Apply></PaletteFoot>
          </Palette>

          <Center>
            <ViewTabs>
              {viewTabs.map(([icon, name, w, on]) => (
                <ViewTab key={name} $w={w} $on={on}>
                  <S c={on ? "#444" : "#777"}>{tabArt[icon]}</S>{name}{on && <Cross />}
                </ViewTab>
              ))}
              <TabMenu aria-label="Alle Ansichten"><svg width="7" height="7" viewBox="0 0 7 7"><path d="M0 1h7" stroke="#333" /><path d="M0 3h7L3.500 6.500z" fill="#333" /></svg></TabMenu>
            </ViewTabs>
            <CanvasRow>
              <Canvas>
                <FloorPlan />
                <NavBar>
                  <svg width="21" height="76" viewBox="0 0 21 76" fill="none" stroke="#8f8f8f">
                    <circle cx="17" cy="4" r="2" /><circle cx="17" cy="72" r="2" /><path d="M16 72h2M16 3l2 2" />
                    <circle cx="9" cy="20" r="6" /><circle cx="9" cy="20" r="3" /><path d="M3 20v6h9" />
                    <text x="11" y="28" fontSize="6" fontFamily="Roboto" fontWeight="700" fill="#4a86b8" stroke="none">2D</text>
                    <path d="M2 38.500h17" stroke="#c2c2c2" /><path d="M6 44h8v8H6z" /><circle cx="13.500" cy="51" r="2" fill="#eee" /><path d="M15 53l2 2" />
                    <path d="M8 33h4l-2 2.500zM8 62h4l-2 2.500z" fill="#777" stroke="none" />
                  </svg>
                </NavBar>
              </Canvas>
              <VScroll $from={263} $size={12} $w={11}>
                <button aria-label="Nach oben"><Chevron dir="up" /></button>
                <button aria-label="Nach unten"><Chevron /></button>
              </VScroll>
            </CanvasRow>
            <ViewBar>
              <ViewScale>1 : 50</ViewScale>
              {viewIcons.map(([name, icon]) => <ViewButton key={name} aria-label={name}>{icon}</ViewButton>)}
              <ViewButton aria-label="Nach links"><Chevron dir="left" /></ViewButton>
              <HTrack $from={289} $size={11} />
              <ViewButton aria-label="Nach rechts"><Chevron dir="right" /></ViewButton>
              <StatusItem $w={11} />
            </ViewBar>
          </Center>

          <Browser>
            <BrowserTitle>Projektbrowser - Projekt1<CloseButton aria-label="Schließen"><Cross /></CloseButton></BrowserTitle>
            <Tree>
              {tree.map(([level, sign, name, icon], i) => (
                <TreeRow key={i} $level={level}>
                  {sign ? (
                    <TreeToggle aria-label={name}>
                      <svg width="5" height="5" viewBox="0 0 5 5"><path d={sign === "+" ? "M1 2.500h3M2.500 1v3" : "M1 2.500h3"} stroke="#444" /></svg>
                    </TreeToggle>
                  ) : level === 0 ? <TreeLine /> : null}
                  {icon ? <TreeIcon><S>{treeArt[icon]}</S></TreeIcon> : <TreeLine $leaf={!sign} />}
                  <TreeText $on={name === "Koordination EG"}>{name}</TreeText>
                </TreeRow>
              ))}
            </Tree>
            <ViewBar>
              <ViewButton aria-label="Nach links"><Chevron dir="left" /></ViewButton>
              <HTrack $from={0} $size={110} />
              <ViewButton aria-label="Nach rechts"><Chevron dir="right" /></ViewButton>
            </ViewBar>
          </Browser>
        </Main>

        <StatusBar>
          <StatusMessage>EG.dwg : Importiertes Symbol : Position &lt;Nicht gemeinsam genutzt&gt;</StatusMessage>
          <StatusItem $w={18}><S c="#2c7a8a"><path d="M1 5h4v6H1zM7 5h4v6H7z" fill="#bfe3ec" /><circle cx="6" cy="3" r="2" stroke="#3f9d3f" strokeWidth="1.600" /></S></StatusItem>
          <Combo $w={137} $white><select aria-label="Bearbeitungsbereich"><option></option></select><Chevron c="#aaa" /></Combo>
          <StatusItem $w={17}><S c="#888"><path d="M2 2h8v3H2zM6 5v3H3v3" fill="#bbb" /></S></StatusItem>
          <StatusItem $w={12}>:0</StatusItem>
          <StatusItem $w={36}><S c="#2f4f5f"><path d="M1 1h10v10H1zM3 6h6M5 8h4" /><path d="M1 2.500h10" strokeWidth="2" /></S></StatusItem>
          <StatusItem $w={9}><S c="#999"><path d="M2 1h9v9H2z" fill="#999" /><path d="M2 11l5-5" stroke="#eee" /></S></StatusItem>
          <Combo $w={137} $white><select aria-label="Entwurfsoption"><option>Basisvorlage</option></select><Chevron c="#aaa" /></Combo>
          <StatusEnd>
            {selectIcons.map(([name, icon]) => <QuickButton key={name} $w={17} aria-label={name}>{icon}</QuickButton>)}
            <StatusItem $w={15}><S><path d="M1 1h10L7 6v5L5 9V6z" fill="#ddd" /></S></StatusItem>
            :0
          </StatusEnd>
        </StatusBar>

        <Recorder>
          <RecTime>00:12:59</RecTime>
          <RecButton $w={28} aria-label="Pause"><svg width="9" height="10"><path d="M1 0h2.500v10H1zM5.500 0H8v10H5.500z" fill="#e8e8e8" /></svg></RecButton>
          <RecButton $w={26} aria-label="Neu starten"><svg width="13" height="13" viewBox="0 0 13 13" fill="none" stroke="#e8e8e8" strokeWidth="1.500"><path d="M2 4a5.300 5.300 0 1 1-.5 4M2 1v3.500h3.500" /><circle cx="6.800" cy="6.700" r="1.800" fill="#e8e8e8" stroke="none" /></svg></RecButton>
          <RecButton $w={27} aria-label="Stopp"><svg width="9" height="9"><rect width="9" height="9" fill="#d8d8d8" /></svg></RecButton>
          <RecText $w={15}>|</RecText>
          <RecField aria-label="Breite" defaultValue="1920" />
          <RecText $w={15}>×</RecText>
          <RecField aria-label="Höhe" defaultValue="1040" />
          <RecButton $w={40} aria-label="Vollbild"><svg width="10" height="10" fill="none" stroke="#666" strokeWidth="1.300"><path d="M1 3.500V1h2.500M6.500 1H9v2.500M9 6.500V9H6.500M3.500 9H1V6.500" /></svg></RecButton>
          <RecButton $w={14} aria-label="Ton"><svg width="12" height="12" fill="none" stroke="#666" strokeWidth="1.200"><path d="M1 4h2l3-3v10L3 8H1zM8 4v4M10 3v6M1 1l10 10" /></svg></RecButton>
          <RecButton $w={40} aria-label="Mikrofon"><svg width="9" height="12" fill="none" stroke="#777" strokeWidth="1.200"><rect x="2.800" y="1" width="3.400" height="6" rx="1.700" /><path d="M1 5v1q0 3 3.500 3T8 6V5M4.500 9v2.500M2.500 11.400h4" /></svg></RecButton>
          <RecText $w={0}>|</RecText>
          <RecButton $w={36} aria-label="Ansicht umschalten"><svg width="12" height="15" fill="none" stroke="#f0f0f0" strokeWidth="1.200"><path d="M9 1.500H1v11h8M11.500 0v15" /><path d="M4.500 5v4l3-2z" fill="#f0f0f0" /></svg></RecButton>
          <RecButton $w={18} aria-label="Minimieren"><svg width="10" height="2"><path d="M0 1h10" stroke="#e8e8e8" /></svg></RecButton>
          <RecButton $w={36} aria-label="Schließen"><svg width="9" height="9"><path d="M.5.5l8 8M8.500.5l-8 8" stroke="#e8e8e8" strokeWidth="1.200" /></svg></RecButton>
        </Recorder>
      </Screen>
    </>
  );
}
